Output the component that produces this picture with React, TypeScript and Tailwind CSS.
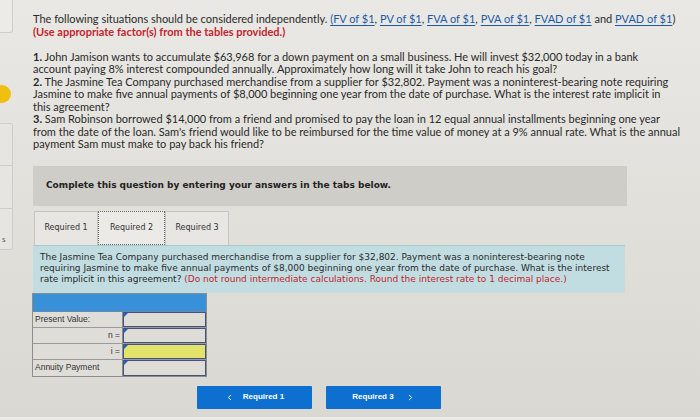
import { ChevronLeft, ChevronRight } from "lucide-react";

function L({ children }: { children: React.ReactNode }) {
  return <span className="text-[#1d5aa6] underline underline-offset-[1.5px] decoration-[0.8px]">{children}</span>;
}

export default function App() {
  return (
    <div className="w-[700px] h-[420px] overflow-hidden flex bg-linear-to-b from-[#e9e8e4] to-[#dad8d2] border-b-[3px] border-[#ecebe8]">
      <div className="w-[13px] shrink-0 flex flex-col">
        <div className="h-[33px] w-[13px] border-r border-b border-[#cfcdc8] rounded-br-[3px] bg-[#ecebe7]" />
        <div className="mt-[52px] -ml-[7px] w-[18px] h-[18px] rounded-full bg-[#efbf12]" />
        <div className="mt-[20px] w-[13px] h-[127px] border-r border-y border-[#cfcdc8] rounded-r-[3px] flex flex-col bg-[#e6e5e1]">
          <div className="h-[42px] border-b border-[#cfcdc8]" />
          <div className="h-[43px] border-b border-[#cfcdc8]" />
          <div className="flex-1 flex items-end pb-[6px] pl-[2px] text-[8px] leading-none text-[#555] font-['Lato',sans-serif]">s</div>
        </div>
      </div>

      <div className="flex-1 pl-[20px] pt-[13px]">
        <div className="font-['Lato',sans-serif] text-[11px] leading-[12.5px] text-[#2a2a2a] whitespace-nowrap">
          <p>
            The following situations should be considered independently. <L>(FV of $1</L>, <L>PV of $1</L>, <L>FVA of $1</L>, <L>PVA of $1</L>, <L>FVAD of $1</L> and <L>PVAD of $1</L>)
          </p>
          <p className="font-bold text-[#c3262e]">(Use appropriate factor(s) from the tables provided.)</p>
          <div className="mt-[12.5px]">
            <p><b>1.</b> John Jamison wants to accumulate $63,968 for a down payment on a small business. He will invest $32,000 today in a bank</p>
            <p>account paying 8% interest compounded annually. Approximately how long will it take John to reach his goal?</p>
            <p><b>2.</b> The Jasmine Tea Company purchased merchandise from a supplier for $32,802. Payment was a noninterest-bearing note requiring</p>
            <p>Jasmine to make five annual payments of $8,000 beginning one year from the date of purchase. What is the interest rate implicit in</p>
            <p>this agreement?</p>
            <p><b>3.</b> Sam Robinson borrowed $14,000 from a friend and promised to pay the loan in 12 equal annual installments beginning one year</p>
            <p>from the date of the loan. Sam's friend would like to be reimbursed for the time value of money at a 9% annual rate. What is the annual</p>
            <p>payment Sam must make to pay back his friend?</p>
          </div>
        </div>

        <div className="mt-[15px] w-[594px] h-[40px] bg-[#cfcdc7] flex items-center pl-[13px] font-['DejaVu_Sans',sans-serif] font-bold text-[9px] text-[#222]">
          Complete this question by entering your answers in the tabs below.
        </div>

        <div className="mt-[5px] ml-[1px] flex h-[34px] font-['DejaVu_Sans',sans-serif] text-[8px] text-[#333]">
          <div className="w-[64px] flex items-center justify-center border border-b-0 border-[#c6c5c0] bg-[#e7e6e2]">Required 1</div>
          <div className="w-[67px] flex items-center justify-center border border-dotted border-[#6b6b6b] bg-[#ebeae6]">Required 2</div>
          <div className="w-[64px] flex items-center justify-center border border-b-0 border-[#c6c5c0] bg-[#e7e6e2]">Required 3</div>
        </div>

        <div className="w-[592px] h-[48px] bg-[#c1dde2] border-t border-[#a9c9cf] px-[7px] pt-[6px] font-['DejaVu_Sans',sans-serif] text-[9px] leading-[11px] text-[#2a2a2a] whitespace-nowrap">
          <p>The Jasmine Tea Company purchased merchandise from a supplier for $32,802. Payment was a noninterest-bearing note</p>
          <p>requiring Jasmine to make five annual payments of $8,000 beginning one year from the date of purchase. What is the interest</p>
          <p>rate implicit in this agreement? <span className="text-[#c3262e]">(Do not round intermediate calculations. Round the interest rate to 1 decimal place.)</span></p>
        </div>

        <div className="w-[175px] -ml-[1px] border border-[#8d8d8d] font-['Liberation_Sans',sans-serif] text-[8.5px] text-[#333]">
          <div className="h-[18px] bg-[#3790d8] border-b border-[#6a86a8]" />
          {[
            { label: "Present Value:", right: false, yellow: false },
            { label: "n =", right: true, yellow: false },
            { label: "i =", right: true, yellow: true },
            { label: "Annuity Payment", right: false, yellow: false },
          ].map((r, i) => (
            <div key={i} className={`flex h-[16px] ${i < 3 ? "border-b border-[#9a9a9a]" : ""}`}>
              <div className={`w-[90px] flex items-center px-[2px] border-r border-[#8d8d8d] bg-[#dfddd8] ${r.right ? "justify-end" : "justify-start"}`}>
                {r.label}
              </div>
              <div className={`relative flex-1 border border-[#46517c] ${r.yellow ? "bg-[#e2e36a]" : "bg-[#dedcd7]"}`}>
                <div className="absolute left-0 top-0 w-0 h-0 border-t-[4px] border-r-[4px] border-t-[#1e62c8] border-r-transparent" />
              </div>
            </div>
          ))}
        </div>

        <div className="mt-[9px] ml-[164px] flex gap-[14px] font-['Liberation_Sans',sans-serif] font-bold text-[8px] text-white">
          <div className="w-[115px] h-[23px] bg-[#0d6fd0] flex items-center justify-center gap-[9px] rounded-[1px]">
            <ChevronLeft size={9} strokeWidth={2.5} />
            <span>Required 1</span>
          </div>
          <div className="w-[115px] h-[23px] bg-[#0d6fd0] flex items-center justify-center gap-[12px] rounded-[1px]">
            <span>Required 3</span>
            <ChevronRight size={9} strokeWidth={2.5} />
          </div>
        </div>
      </div>
    </div>
  );
}
